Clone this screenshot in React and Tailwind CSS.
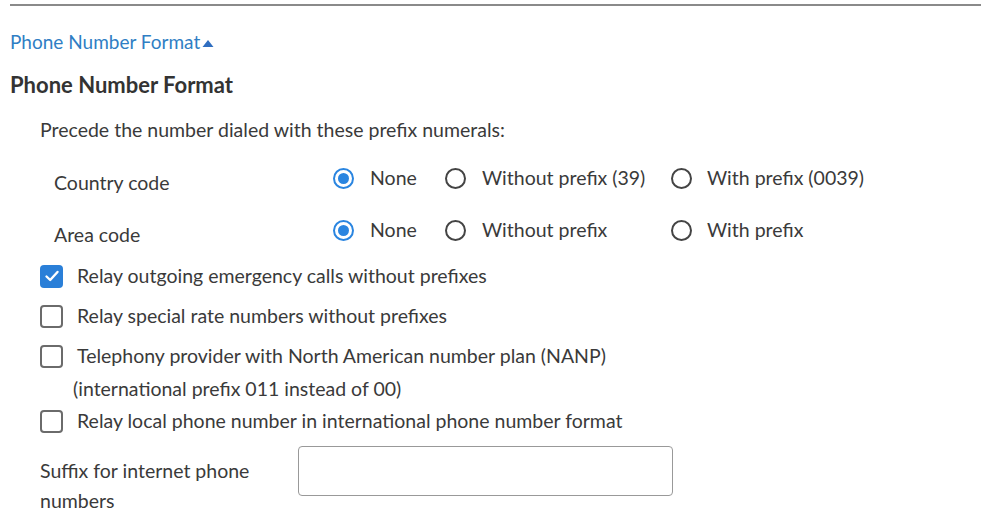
import React from "react";

const font = { fontFamily: "Lato, 'Noto Sans', sans-serif" };

function Radio({ checked }) {
  return (
    <span
      className={
        "inline-flex h-[21px] w-[21px] shrink-0 items-center justify-center rounded-full border-2 " +
        (checked ? "border-[#2a85e0]" : "border-[#444]")
      }
    >
      {checked && <span className="h-[11px] w-[11px] rounded-full bg-[#2a85e0]" />}
    </span>
  );
}

function Checkbox({ checked }) {
  return checked ? (
    <span className="inline-flex h-[23px] w-[23px] shrink-0 items-center justify-center rounded-[4px] bg-[#2a7fd8]">
      <svg width="16" height="16" viewBox="0 0 16 16" fill="none">
        <path d="M2.5 8.5 L6.2 12 L13.5 4" stroke="white" strokeWidth="2.4" strokeLinecap="round" strokeLinejoin="round" />
      </svg>
    </span>
  ) : (
    <span className="inline-block h-[23px] w-[23px] shrink-0 rounded-[4px] border-2 border-[#6b6b6b] bg-white" />
  );
}

function RadioOpt({ checked, label, w, gap }) {
  return (
    <div className={"flex items-center " + gap + " " + w}>
      <Radio checked={checked} />
      <span>{label}</span>
    </div>
  );
}

function RadioRow({ label, opts }) {
  return (
    <div className="flex items-start text-[19.5px]">
      <div className="mt-[5px] h-[30px] w-[333px] pl-[54px] leading-[30px]">{label}</div>
      <div className="flex h-[30px] items-center">
        <RadioOpt checked label="None" w="w-[112px]" gap="gap-[16px]" />
        <RadioOpt label={opts[0]} w="w-[226px]" gap="gap-[16px]" />
        <RadioOpt label={opts[1]} w="" gap="gap-[15px]" />
      </div>
    </div>
  );
}

export default function App() {
  return (
    <div className="h-[532px] w-[981px] overflow-hidden bg-white text-[#3a3a3a]" style={font}>
      <div className="ml-[10px] mt-[4px] h-[2px] bg-[#8a8a8a]" />
      <div className="ml-[10px] mt-[24px] flex h-[24px] items-center text-[19px] text-[#2f7ec4]">
        <span>Phone Number Format</span>
        <svg width="14" height="10" viewBox="0 0 14 10" className="ml-[1px] mt-[1px]">
          <path d="M1.5 9 L7 2 L12.5 9 Z" fill="#2f6ec0" />
        </svg>
      </div>
      <div className="ml-[10px] mt-[17px] h-[28px] text-[22px] font-bold leading-[28px] text-[#333]">
        Phone Number Format
      </div>
      <div className="ml-[40px] mt-[18px] h-[26px] text-[19.5px] leading-[26px]">
        Precede the number dialed with these prefix numerals:
      </div>

      <div className="mt-[20px]">
        <RadioRow label="Country code" opts={["Without prefix (39)", "With prefix (0039)"]} />
      </div>
      <div className="mt-[17px]">
        <RadioRow label="Area code" opts={["Without prefix", "With prefix"]} />
      </div>

      <div className="ml-[40px] mt-[6px] flex flex-col text-[19.5px]">
        <div className="flex h-[40px] items-center gap-[14px]">
          <Checkbox checked />
          <span>Relay outgoing emergency calls without prefixes</span>
        </div>
        <div className="flex h-[40px] items-center gap-[14px]">
          <Checkbox />
          <span>Relay special rate numbers without prefixes</span>
        </div>
        <div className="flex h-[40px] items-center gap-[14px]">
          <Checkbox />
          <span>Telephony provider with North American number plan (NANP)</span>
        </div>
        <div className="ml-[33px] h-[25px] leading-[25px]">(international prefix 011 instead of 00)</div>
        <div className="flex h-[40px] items-center gap-[14px]">
          <Checkbox />
          <span>Relay local phone number in international phone number format</span>
        </div>
      </div>

      <div className="ml-[40px] mt-[5px] flex items-start text-[19.5px]">
        <div className="w-[258px] pt-[10px] leading-[30px]">
          Suffix for internet phone
          <br />
          numbers
        </div>
        <input className="h-[50px] w-[375px] rounded-[4px] border border-[#999] bg-white outline-none" />
      </div>
    </div>
  );
}
